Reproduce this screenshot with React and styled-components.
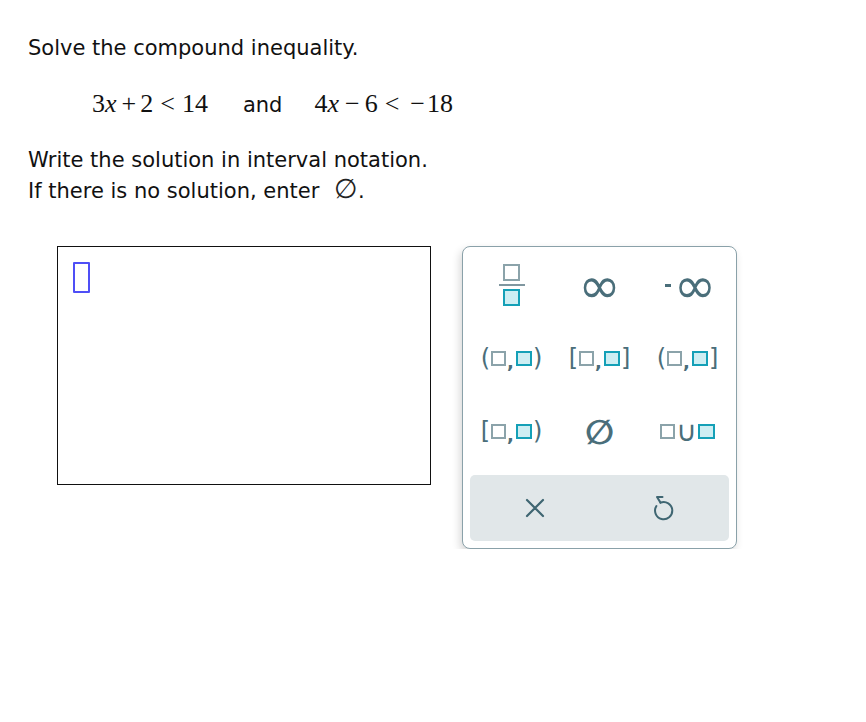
import React from "react";
import styled, { createGlobalStyle } from "styled-components";

const Global = createGlobalStyle`
  html, body { margin: 0; padding: 0; background: #fff; }
  body { font-family: "DejaVu Sans", Verdana, sans-serif; color: #111; }
`;

const Page = styled.div`
  padding: 33px 0 0 28px;
`;

const Line = styled.p`
  margin: 0;
  font-size: 21px;
  line-height: 31px;
`;

const MathRow = styled.div`
  display: flex;
  align-items: baseline;
  padding-left: 64px;
  margin: 24px 0 26px;
  height: 31px;
  line-height: 31px;
`;

const Expr = styled.span`
  font-family: "Liberation Serif", "Times New Roman", serif;
  font-size: 26px;
  color: #111;
`;

const V = styled.span`
  font-style: italic;
  margin-right: 1px;
`;

const Op = styled.span`
  margin: 0 ${(p) => p.$r ?? p.$m ?? 4}px 0 ${(p) => p.$l ?? p.$m ?? 4}px;
`;

const And = styled.span`
  font-size: 21px;
  margin: 0 32px 0 35px;
`;

const EmptySet = styled.span`
  font-family: "Liberation Serif", "DejaVu Serif", serif;
  font-size: 27px;
  line-height: 1;
  margin-left: 8px;
  color: #222;
`;

const Work = styled.div`
  display: flex;
  align-items: flex-start;
  gap: 31px;
  margin: 39px 0 0 29px;
`;

const AnswerBox = styled.div`
  box-sizing: border-box;
  width: 374px;
  height: 239px;
  border: 1px solid #111;
  padding: 15px 0 0 15px;
`;

const Cursor = styled.div`
  box-sizing: border-box;
  width: 17px;
  height: 31px;
  border: 2px solid #4f4ff6;
  border-radius: 1px;
`;

const Keypad = styled.div`
  box-sizing: border-box;
  width: 275px;
  height: 303px;
  border: 1px solid #8aa1a9;
  border-radius: 8px;
  box-shadow: -2px 4px 8px rgba(0, 0, 0, 0.16);
  padding: 2px 7px 7px;
  display: flex;
  flex-direction: column;
  background: #fff;
`;

const Grid = styled.div`
  display: grid;
  grid-template-columns: repeat(3, 88px);
  grid-auto-rows: 73px;
  justify-content: center;
`;

const Key = styled.div`
  display: flex;
  align-items: center;
  justify-content: center;
  color: #4a6e7a;
  font-family: "DejaVu Sans", sans-serif;
`;

const Box = styled.span`
  box-sizing: border-box;
  display: inline-block;
  width: ${(p) => p.$w || 15}px;
  height: ${(p) => p.$h || 15}px;
  border: 2.5px solid ${(p) => (p.$teal ? "#14a0b7" : "#8ba3aa")};
  background: ${(p) => (p.$teal ? "#cdeef3" : "#fff")};
`;

const Frac = styled.div`
  display: flex;
  flex-direction: column;
  align-items: center;
  gap: 3px;
  margin-top: -2px;
`;

const FracBar = styled.span`
  display: block;
  width: 26px;
  height: 2px;
  background: #8097a0;
`;

const Sym = styled.span`
  font-size: ${(p) => p.$s || 36}px;
  line-height: 1;
  font-weight: ${(p) => p.$b || "normal"};
  display: inline-flex;
  align-items: center;
`;

const Dash = styled.span`
  display: inline-block;
  width: 6px;
  height: 3px;
  background: #4a6e7a;
  margin: 0 3px 0 6px;
`;

const Interval = styled.div`
  display: flex;
  align-items: center;
`;

const Bracket = styled.span`
  font-family: "DejaVu Sans", sans-serif;
  font-size: 24px;
  line-height: 1;
  color: #4a6e7a;
  margin: 0 ${(p) => p.$r || 0}px 0 ${(p) => p.$l || 0}px;
  position: relative;
  top: -1px;
`;

const Comma = styled.span`
  font-size: 18px;
  font-weight: bold;
  color: #4a6e7a;
  margin: 6px 2px 0 1px;
  line-height: 1;
`;

const Cup = styled.span`
  font-size: 28px;
  color: #4a6e7a;
  margin: 0 1px;
  line-height: 1;
`;

const Bar = styled.div`
  margin-top: 7px;
  height: 66px;
  border-radius: 5px;
  background: #e1e7e9;
  display: grid;
  grid-template-columns: 1fr 1fr;
`;

const BarKey = styled.div`
  display: flex;
  align-items: center;
  justify-content: center;
  color: #3f6672;
`;

function IntervalKey({ open, close }) {
  return (
    <Interval>
      <Bracket $r={1}>{open}</Bracket>
      <Box $w={15} $h={15} />
      <Comma>,</Comma>
      <Box $teal $w={16} $h={15} />
      <Bracket $l={1}>{close}</Bracket>
    </Interval>
  );
}

export default function App() {
  return (
    <>
      <Global />
      <Page>
        <Line>Solve the compound inequality.</Line>
        <MathRow>
          <Expr>
            3<V>x</V>
            <Op $m={4}>+</Op>2<Op $m={7}>&lt;</Op>14
          </Expr>
          <And>and</And>
          <Expr>
            4<V>x</V>
            <Op $m={5}>−</Op>6<Op $m={7}>&lt;</Op>
            <Op $l={4} $r={2}>−</Op>18
          </Expr>
        </MathRow>
        <Line>Write the solution in interval notation.</Line>
        <Line>
          If there is no solution, enter <EmptySet>∅</EmptySet>.
        </Line>
        <Work>
          <AnswerBox>
            <Cursor />
          </AnswerBox>
          <Keypad>
            <Grid>
              <Key>
                <Frac>
                  <Box $w={17} $h={17} />
                  <FracBar />
                  <Box $teal $w={17} $h={17} />
                </Frac>
              </Key>
              <Key>
                <Sym $s={51}>∞</Sym>
              </Key>
              <Key>
                <Sym $s={51}>
                  <Dash />∞
                </Sym>
              </Key>
              <Key>
                <IntervalKey open="(" close=")" />
              </Key>
              <Key>
                <IntervalKey open="[" close="]" />
              </Key>
              <Key>
                <IntervalKey open="(" close="]" />
              </Key>
              <Key>
                <IntervalKey open="[" close=")" />
              </Key>
              <Key>
                <Sym $s={34} $b="bold">∅</Sym>
              </Key>
              <Key>
                <Interval>
                  <Box $w={15} $h={15} />
                  <Cup>∪</Cup>
                  <Box $teal $w={17} $h={15} />
                </Interval>
              </Key>
            </Grid>
            <Bar>
              <BarKey>
                <svg width="20" height="20" viewBox="0 0 20 20" fill="none" stroke="currentColor" strokeWidth="2.2" strokeLinecap="round">
                  <path d="M2 2 L18 18 M18 2 L2 18" />
                </svg>
              </BarKey>
              <BarKey>
                <svg width="22" height="26" viewBox="0 0 22 26" fill="none" stroke="currentColor" strokeWidth="2" strokeLinecap="round" strokeLinejoin="round">
                  <path d="M7.5 7.6 A8.6 8.6 0 1 1 3.4 11" />
                  <path d="M9.5 2 L4 2 L7.5 7.6" />
                </svg>
              </BarKey>
            </Bar>
          </Keypad>
        </Work>
      </Page>
    </>
  );
}
